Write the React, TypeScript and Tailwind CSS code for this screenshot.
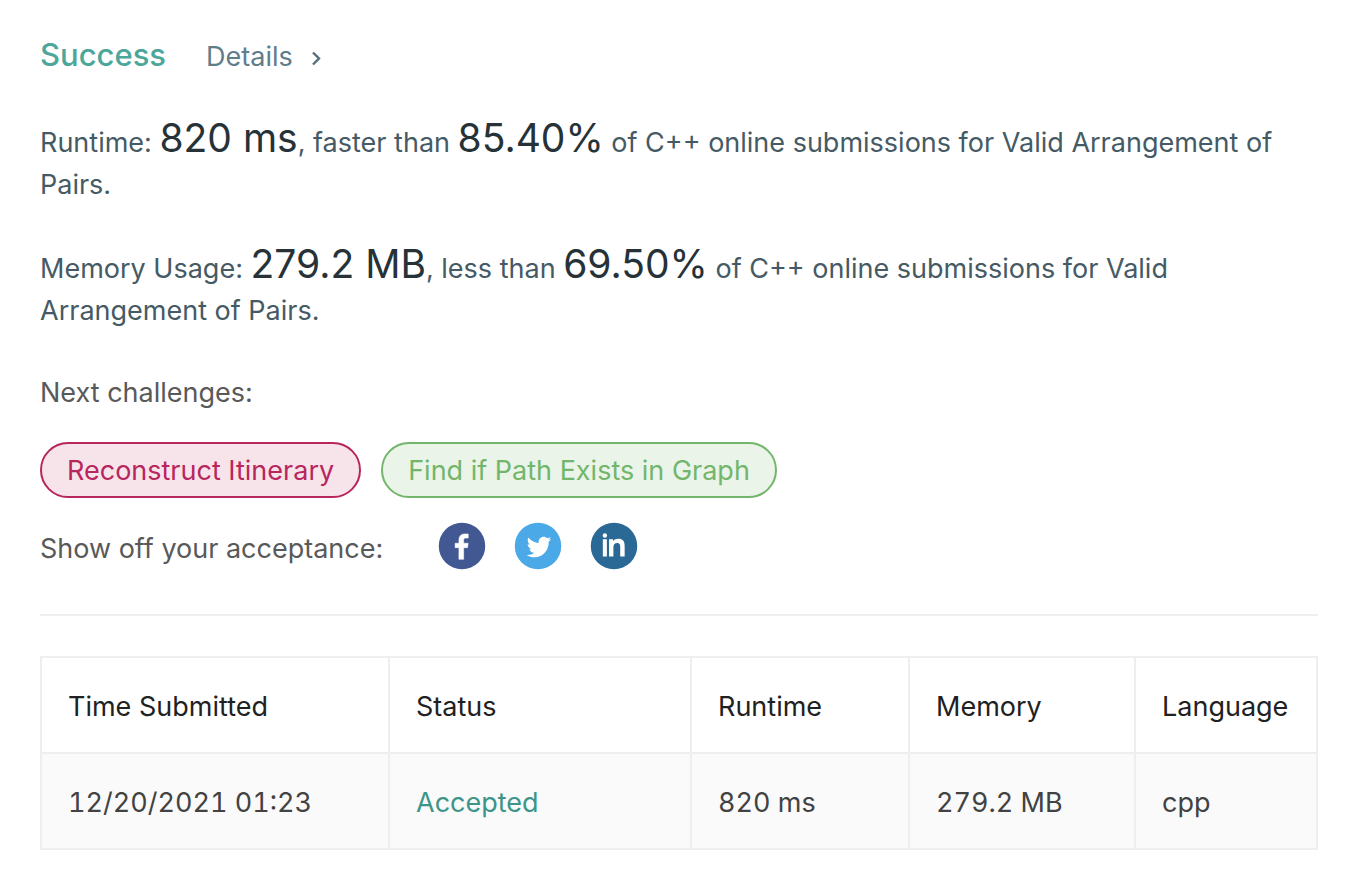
import { ReactNode } from "react";

const Strong = ({ children }: { children: ReactNode }) => (
  <span className="text-[39px] leading-9 text-[#263238]">{children}</span>
);

const headers = ["Time Submitted", "Status", "Runtime", "Memory", "Language"];

export default function App() {
  return (
    <main className="min-h-screen bg-white pt-8 pb-5 pl-10 pr-[34px] font-['Inter',sans-serif] text-[27px] leading-[42px] text-[#455a64]">
      <header className="flex items-baseline gap-10">
        <h1 className="text-[31px] font-medium leading-[46px] text-[#4ca69a]">Success</h1>
        <a href="#details" className="flex items-center gap-4 text-[#607d8b]">
          Details
          <svg className="mt-1" width="14" height="16" viewBox="0 0 14 16" fill="none" stroke="#546e7a" strokeWidth="2.4" aria-hidden="true">
            <path d="M4 1.5l6 6-6 6" />
          </svg>
        </a>
      </header>
      <p className="mt-[42px]">
        Runtime: <Strong>820 ms</Strong>, faster than <Strong>85.40%</Strong> of C++ online submissions for Valid Arrangement of Pairs.
      </p>
      <p className="mt-10">
        Memory Usage: <Strong>279.2 MB</Strong>, less than <Strong>69.50%</Strong> of C++ online submissions for Valid Arrangement of Pairs.
      </p>
      <h2 className="mt-10 text-[#595959]">Next challenges:</h2>
      <nav className="mt-7 flex gap-5">
        <a href="#itinerary" className="rounded-full border-2 border-[#b7265d] bg-[#f7e4eb] px-[25px] pt-1.5 pb-1 text-[#b7265d]">Reconstruct Itinerary</a>
        <a href="#path" className="rounded-full border-2 border-[#73b66b] bg-[#eaf4e9] px-[25px] pt-1.5 pb-1 text-[#73b66b]">Find if Path Exists in Graph</a>
      </nav>
      <div className="mt-6 flex items-center gap-7 text-[#595959]">
        <span className="mr-[27px] pt-1.5">Show off your acceptance:</span>
        <a href="#facebook" aria-label="Facebook">
          <svg width="48" height="48" viewBox="0 0 64 64"><circle cx="32" cy="32" r="31" fill="#425893" /><path transform="translate(31.5 32.8) scale(1.13) translate(-31.7 -32)" fill="#fff" stroke="#fff" strokeWidth="0.6" d="M34.1 47V33.3h4.6l.7-5.3h-5.3v-3.4c0-1.5.4-2.6 2.6-2.6h2.8v-4.8c-.5-.1-2.2-.2-4.1-.2-4.1 0-6.9 2.5-6.9 7V28H24v5.3h4.5V47h5.6z" /></svg>
        </a>
        <a href="#twitter" aria-label="Twitter">
          <svg width="48" height="48" viewBox="0 0 64 64"><circle cx="32" cy="32" r="31" fill="#4ba9e8" /><path transform="translate(33.3 33.3) scale(1.02 1.06) translate(-32 -32)" fill="#fff" d="M48 22.1c-1.2.5-2.4.9-3.8 1 1.4-.8 2.4-2.1 2.9-3.6-1.3.8-2.7 1.3-4.2 1.6-1.2-1.3-2.9-2.1-4.8-2.1-3.6 0-6.6 2.9-6.6 6.6 0 .5.1 1 .2 1.5-5.5-.3-10.3-2.9-13.5-6.9-.6 1-.9 2.1-.9 3.3 0 2.3 1.2 4.3 2.9 5.5-1.1 0-2.1-.3-3-.8v.1c0 3.2 2.3 5.8 5.3 6.4-.6.1-1.1.2-1.7.2-.4 0-.8 0-1.2-.1.8 2.6 3.3 4.5 6.1 4.6-2.2 1.8-5.1 2.8-8.2 2.8-.5 0-1.1 0-1.6-.1 2.9 1.9 6.4 2.9 10.1 2.9 12.1 0 18.7-10 18.7-18.7v-.8c1.3-1 2.4-2.1 3.3-3.4z" /></svg>
        </a>
        <a href="#linkedin" aria-label="LinkedIn">
          <svg width="48" height="48" viewBox="0 0 64 64"><circle cx="32" cy="32" r="31" fill="#2a6896" /><circle cx="19.8" cy="18" r="2.9" fill="#fff" /><path fill="#fff" d="M17.1 23h5.4v23h-5.4zM25.4 46V23h5.3v2.8c1-1.9 3.3-3.4 6.8-3.4 6.2 0 8.7 3.2 8.7 9.6v14h-5.9V33.5c0-3.6-1-5.4-4-5.4-3.3 0-5.1 2.1-5.1 5.6V46z" /></svg>
        </a>
      </div>
      <hr className="mt-11 mb-10 border-t-2 border-[#eeeeee]" />
      <table className="w-full border-collapse text-left">
        <colgroup>
          <col className="w-[348px]" /><col className="w-[302px]" /><col className="w-[218px]" /><col className="w-[226px]" /><col />
        </colgroup>
        <thead>
          <tr>
            {headers.map((h) => (
              <th key={h} className="border-2 border-[#eeeeee] px-[26px] pt-7 pb-6 font-normal text-[#212121]">{h}</th>
            ))}
          </tr>
        </thead>
        <tbody>
          <tr className="bg-[#fafafa] tabular-nums text-[#424242]">
            <td className="border-2 border-[#eeeeee] px-[26px] pt-7 pb-6">12/20/2021 01:23</td>
            <td className="border-2 border-[#eeeeee] px-[26px] pt-7 pb-6 text-[#3c9588]">Accepted</td>
            <td className="border-2 border-[#eeeeee] px-[26px] pt-7 pb-6">820 ms</td>
            <td className="border-2 border-[#eeeeee] px-[26px] pt-7 pb-6">279.2 MB</td>
            <td className="border-2 border-[#eeeeee] px-[26px] pt-7 pb-6">cpp</td>
          </tr>
        </tbody>
      </table>
    </main>
  );
}
